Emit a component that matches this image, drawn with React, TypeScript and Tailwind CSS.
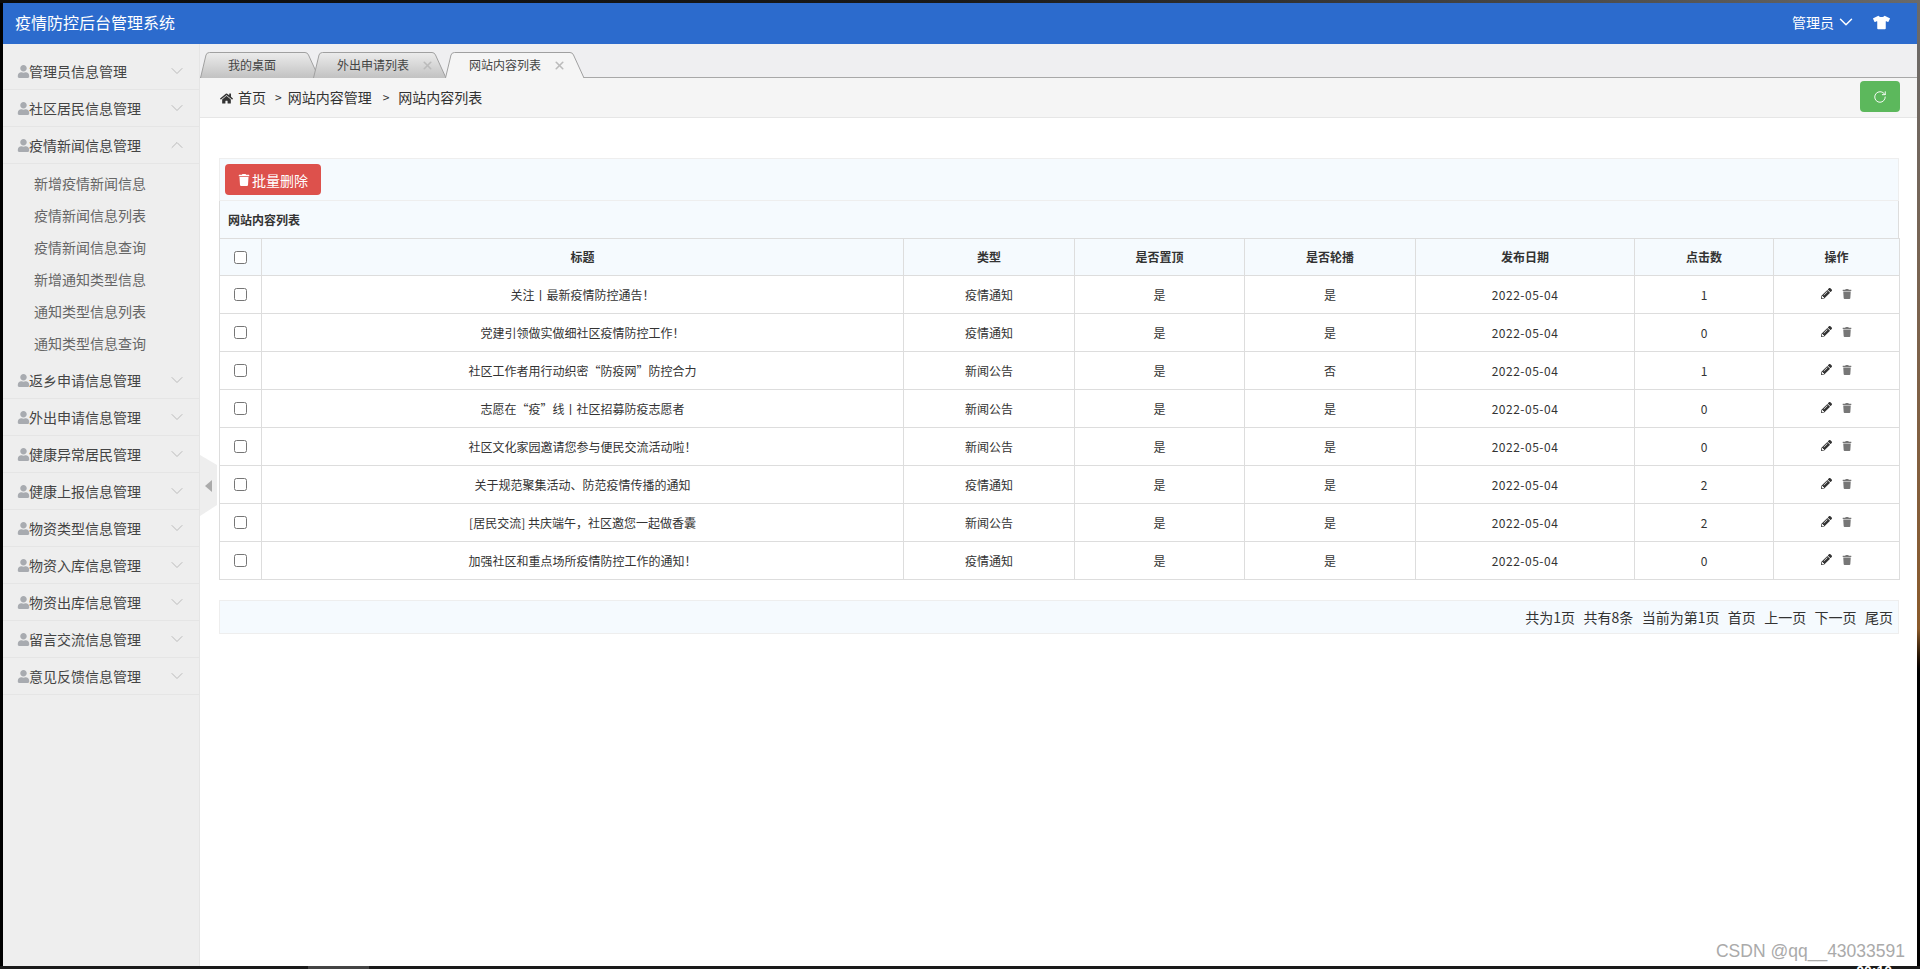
import { FaHome, FaPencilAlt, FaTrash, FaTshirt, FaUser } from "react-icons/fa";
import { ChevronDown, ChevronUp, RotateCw, X } from "lucide-react";

const font = "font-['Noto_Sans_CJK_SC','Liberation_Sans',sans-serif]";

const menusTop = ["管理员信息管理", "社区居民信息管理"];
const subMenus = ["新增疫情新闻信息", "疫情新闻信息列表", "疫情新闻信息查询", "新增通知类型信息", "通知类型信息列表", "通知类型信息查询"];
const menusBottom = ["返乡申请信息管理", "外出申请信息管理", "健康异常居民管理", "健康上报信息管理", "物资类型信息管理", "物资入库信息管理", "物资出库信息管理", "留言交流信息管理", "意见反馈信息管理"];

const rows = [
  ["关注丨最新疫情防控通告！", "疫情通知", "是", "是", "2022-05-04", "1"],
  ["党建引领做实做细社区疫情防控工作！", "疫情通知", "是", "是", "2022-05-04", "0"],
  ["社区工作者用行动织密“防疫网”防控合力", "新闻公告", "是", "否", "2022-05-04", "1"],
  ["志愿在“疫”线丨社区招募防疫志愿者", "新闻公告", "是", "是", "2022-05-04", "0"],
  ["社区文化家园邀请您参与便民交流活动啦！", "新闻公告", "是", "是", "2022-05-04", "0"],
  ["关于规范聚集活动、防范疫情传播的通知", "疫情通知", "是", "是", "2022-05-04", "2"],
  ["[居民交流] 共庆端午，社区邀您一起做香囊", "新闻公告", "是", "是", "2022-05-04", "2"],
  ["加强社区和重点场所疫情防控工作的通知！", "疫情通知", "是", "是", "2022-05-04", "0"],
];

const heads = ["标题", "类型", "是否置顶", "是否轮播", "发布日期", "点击数", "操作"];
const pager = ["共为1页", "共有8条", "当前为第1页", "首页", "上一页", "下一页", "尾页"];

function MenuRow({ label, open }: { label: string; open?: boolean }) {
  return (
    <div className="flex items-center h-[37px] border-b border-[#e5e5e5] pl-[14px] pr-[12px]">
      <FaUser className="size-[13px] text-[#a8abb0] -mr-px" />
      <span className="text-sm text-[#444] flex-1">{label}</span>
      {open
        ? <ChevronUp className="size-[20px] text-[#bbb]" strokeWidth={1.2} />
        : <ChevronDown className="size-[20px] text-[#bbb]" strokeWidth={1.2} />}
    </div>
  );
}

function Tab({ id, label, width, active, closable, className }: { id: string; label: string; width: number; active?: boolean; closable?: boolean; className: string }) {
  const d = `M0.5,26 L6,3 Q6.8,0.5 9.5,0.5 H${width - 15} Q${width - 12.5},0.5 ${width - 11.5},3 L${width - 1},26`;
  return (
    <div className={`relative flex items-center h-[26px] ${className}`}>
      <svg className="absolute inset-0" width={width} height={26}>
        <defs>
          <linearGradient id={id} x1="0" y1="0" x2="0" y2="1">
            <stop offset="0" stopColor={active ? "#f5f5f5" : "#ececec"} />
            <stop offset="1" stopColor={active ? "#f5f5f5" : "#c2c2c2"} />
          </linearGradient>
        </defs>
        <path d={d} fill={`url(#${id})`} stroke="#a0a0a0" />
      </svg>
      <span className="relative text-xs text-[#444] leading-none">{label}</span>
      {closable && <X className="relative ml-[12px] size-[13px] text-[#bbb]" strokeWidth={3} />}
    </div>
  );
}

export default function App() {
  return (
    <div className={`${font} flex flex-col w-[1920px] h-[969px] overflow-hidden bg-black`}>
      <div className="h-[3px] bg-gradient-to-r from-[#0c0c0c] via-[#1a1a1a] to-[#6a6a6a]" />
      <div className="flex flex-1 min-h-0">
        <div className="w-[3px] bg-black" />
        <div className="flex flex-col w-[1914px] bg-white">
          <header className="flex items-center h-[41px] pb-[3px] bg-[#2c6bcd] text-white pl-3 pr-[27px]">
            <span className="text-base flex-1">疫情防控后台管理系统</span>
            <span className="text-sm">管理员</span>
            <ChevronDown className="size-[22px] ml-px mr-[16px]" strokeWidth={1.6} />
            <FaTshirt className="size-[17px]" />
          </header>

          <div className="relative flex flex-1 min-h-0">
            <aside className="w-[197px] pt-[9px] bg-[#eeeeee] border-r border-[#e5e5e5]">
              {menusTop.map(m => <MenuRow key={m} label={m} />)}
              <MenuRow label="疫情新闻信息管理" open />
              <div className="pt-[3px] pb-[3px]">
                {subMenus.map(m => (
                  <div key={m} className="flex items-center h-[32px] pl-[31px] text-sm text-[#666]">{m}</div>
                ))}
              </div>
              {menusBottom.map(m => <MenuRow key={m} label={m} />)}
            </aside>

            {/* collapse handle */}
            <svg className="absolute left-[197px] top-[411px]" width="18" height="62">
              <path d="M0,0 L17,10 V50 L0,61 Z" fill="#eeeeee" />
              <path d="M12,25 V37 L5,31 Z" fill="#aaaaaa" />
            </svg>

            <main className="flex-1 min-w-0">
              <div className="flex items-end h-[34px] bg-[#efeff1] border-b border-[#a8a8a8]">
                <Tab id="t1" label="我的桌面" width={120} className="w-[120px] pl-[28px] -mb-px" />
                <Tab id="t2" label="外出申请列表" width={134} closable className="w-[134px] -ml-[7px] pl-[24px] -mb-px" />
                <Tab id="t3" label="网站内容列表" width={140} active closable className="w-[140px] -ml-[2px] pl-[24px] -mb-px" />
              </div>

              <div className="flex items-center h-[40px] pb-[2px] bg-[#f5f5f5] border-b border-[#e6e6e6] pl-[20px] pr-[17px] text-sm text-[#333]">
                <FaHome className="size-[13px] mr-[5px] mt-[3px]" />
                <span>首页</span>
                <span className="ml-[9px] mr-[6px] text-xs">&gt;</span>
                <span>网站内容管理</span>
                <span className="ml-[11px] mr-[9px] text-xs">&gt;</span>
                <span className="flex-1">网站内容列表</span>
                <button className="flex items-center justify-center w-[40px] h-[31px] rounded bg-[#5cb85c] text-white">
                  <RotateCw className="size-[14px]" strokeWidth={1.6} />
                </button>
              </div>

              <div className="pl-[19px] pr-[18px] pt-[40px]">
                <div className="h-[43px] p-[5px] bg-[#f5fafe] border border-[#eeeeee]">
                  <button className="flex items-center justify-center w-[96px] h-[31px] rounded bg-[#dd514c] text-white text-sm">
                    <FaTrash className="size-[12px] mr-[2px]" />
                    批量删除
                  </button>
                </div>
                <div className="flex items-center h-[37px] pl-2 bg-[#f5fafe] border-x border-[#dddddd] text-xs font-bold text-[#333]">网站内容列表</div>
                <table className="w-[1680px] table-fixed border-collapse text-xs text-[#333] text-center">
                  <colgroup>
                    <col className="w-[42px]" />
                    <col className="w-[642px]" />
                    <col className="w-[171px]" />
                    <col className="w-[170px]" />
                    <col className="w-[171px]" />
                    <col className="w-[219px]" />
                    <col className="w-[139px]" />
                    <col className="w-[126px]" />
                  </colgroup>
                  <thead>
                    <tr className="h-[37px] bg-[#f5fafe]">
                      <th className="border border-[#dddddd]"><input type="checkbox" className="block mx-auto" /></th>
                      {heads.map(h => <th key={h} className="border border-[#dddddd] font-bold">{h}</th>)}
                    </tr>
                  </thead>
                  <tbody>
                    {rows.map(r => (
                      <tr key={r[0]} className="h-[38px]">
                        <td className="border border-[#dddddd]"><input type="checkbox" className="block mx-auto" /></td>
                        <td className="border border-[#dddddd]">{r[0]}</td>
                        <td className="border border-[#dddddd]">{r[1]}</td>
                        <td className="border border-[#dddddd]">{r[2]}</td>
                        <td className="border border-[#dddddd]">{r[3]}</td>
                        <td className="border border-[#dddddd] tracking-[0.5px]">{r[4]}</td>
                        <td className="border border-[#dddddd]">{r[5]}</td>
                        <td className="border border-[#dddddd]">
                          <div className="flex items-center justify-center gap-[10px] -mt-[2px]">
                            <FaPencilAlt className="size-[11px] text-[#333]" />
                            <FaTrash className="size-[10px] text-[#777]" />
                          </div>
                        </td>
                      </tr>
                    ))}
                  </tbody>
                </table>
                <div className="flex items-center justify-end gap-[8.4px] h-[34px] mt-[20px] pr-[5px] bg-[#f5fafe] border border-[#eeeeee] text-sm text-[#333]">
                  {pager.map(p => <span key={p}>{p}</span>)}
                </div>
              </div>
            </main>

            <span className="absolute right-[12px] bottom-[3px] font-['Liberation_Sans',sans-serif] text-[17.5px] leading-[24px] text-[#aaaaaa]">CSDN @qq__43033591</span>
          </div>
        </div>
        <div className="w-[3px] bg-gradient-to-b from-[#6a6a6a] via-[#8a5a2a] via-65% to-black to-70%" />
      </div>
      <div className="flex justify-between h-[3px] overflow-hidden bg-[#1a1a1a]">
        <span className="ml-[308px] w-[61px] h-[3px] bg-[#444444]" />
        <span className="mr-[28px] font-['Liberation_Sans',sans-serif] text-[14px] font-bold leading-[14px] -mt-[2px] text-white">00:10</span>
      </div>
    </div>
  );
}
